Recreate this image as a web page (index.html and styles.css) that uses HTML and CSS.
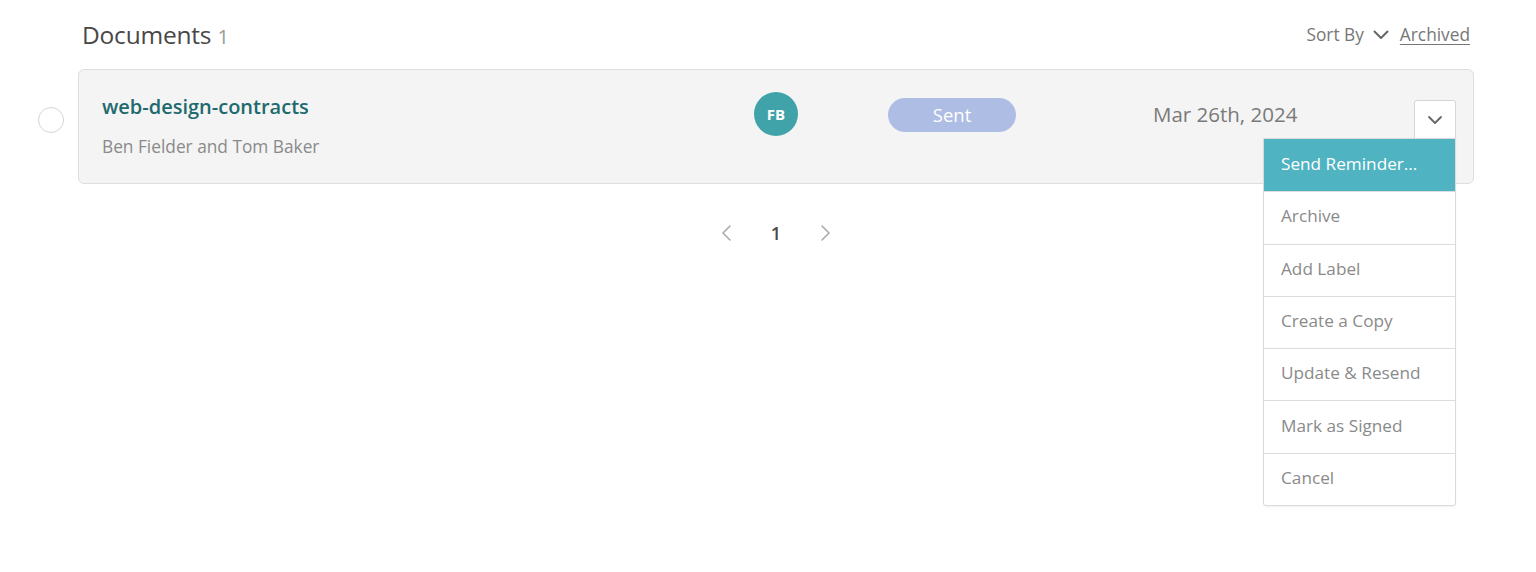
FILE: index.html
```html
<!DOCTYPE html>
<html>
<head>
<meta charset="utf-8">
<link rel="stylesheet" href="styles.css">
</head>
<body>
<div class="page">
  <div class="header">
    <h1 class="title">Documents <span class="count">1</span></h1>
    <div class="sort">
      <span class="sort-label">Sort By</span>
      <svg class="sort-chev" width="16" height="10" viewBox="0 0 16 10"><path d="M1.5 1.5 L8 8 L14.5 1.5" fill="none" stroke="#666" stroke-width="2" stroke-linecap="round" stroke-linejoin="round"/></svg>
      <a class="archived">Archived</a>
    </div>
  </div>
  <div class="row">
    <span class="radio"></span>
    <div class="card">
      <div class="doc">
        <div class="doc-name">web-design-contracts</div>
        <div class="doc-people">Ben Fielder and Tom Baker</div>
      </div>
      <div class="avatar">FB</div>
      <div class="pill">Sent</div>
      <div class="date">Mar 26th, 2024</div>
      <div class="actions">
        <button class="toggle">
          <svg width="16" height="10" viewBox="0 0 16 10"><path d="M2 2 L8 8 L14 2" fill="none" stroke="#666" stroke-width="1.8" stroke-linecap="round" stroke-linejoin="round"/></svg>
        </button>
        <ul class="menu">
          <li class="active">Send Reminder...</li>
          <li>Archive</li>
          <li>Add Label</li>
          <li>Create a Copy</li>
          <li>Update &amp; Resend</li>
          <li>Mark as Signed</li>
          <li>Cancel</li>
        </ul>
      </div>
    </div>
  </div>
  <div class="pager">
    <svg width="12" height="18" viewBox="0 0 12 18"><path d="M10 2 L3 9 L10 16" fill="none" stroke="#aaa" stroke-width="1.6" stroke-linecap="round" stroke-linejoin="round"/></svg>
    <span class="page-num">1</span>
    <svg width="12" height="18" viewBox="0 0 12 18"><path d="M2 2 L9 9 L2 16" fill="none" stroke="#aaa" stroke-width="1.6" stroke-linecap="round" stroke-linejoin="round"/></svg>
  </div>
</div>
</body>
</html>
```

FILE: styles.css
```css
* { box-sizing: border-box; }
html, body { min-height: 100%; }
body {
  margin: 0;
  background: #fff;
  font-family: "Open Sans", "Liberation Sans", sans-serif;
}
.page {
  padding: 0 62px 0 38px;
  min-height: 572px;
}
.header {
  display: flex;
  align-items: center;
  justify-content: space-between;
  height: 69px;
  padding: 0 4px 0 44px;
}
.title {
  margin: 0;
  font-size: 24.5px;
  font-weight: 500;
  color: #484848;
  letter-spacing: -0.2px;
}
.count {
  font-size: 20px;
  color: #9a9a9a;
}
.sort {
  display: flex;
  align-items: center;
  gap: 9px;
  font-size: 17.3px;
  color: #777;
}
.sort-chev { margin-right: 2px; }
.archived {
  text-decoration: underline;
  text-underline-offset: 3px;
  color: #777;
}
.row {
  display: flex;
  align-items: flex-start;
  gap: 14px;
}
.radio {
  width: 26px;
  height: 26px;
  border: 1.5px solid #d4d4d4;
  border-radius: 50%;
  background: #fff;
  flex: none;
  margin-top: 38px;
}
.card {
  flex: 1;
  display: flex;
  align-items: flex-start;
  background: #f4f4f4;
  border: 1px solid #dedede;
  border-radius: 6px;
  padding: 23px 17px 24px 23px;
}
.doc {
  width: 652px;
}
.doc-name {
  font-size: 20px;
  line-height: 28px;
  font-weight: 600;
  color: #1e6a6e;
}
.doc-people {
  margin-top: 14px;
  font-size: 17.3px;
  line-height: 24px;
  color: #8a8a8a;
}
.avatar {
  width: 44px;
  height: 44px;
  margin-top: -1px;
  border-radius: 50%;
  background: #3fa3a9;
  color: #fff;
  font-size: 15px;
  font-weight: 700;
  display: flex;
  align-items: center;
  justify-content: center;
}
.pill {
  margin: 5px 0 0 90px;
  width: 128px;
  height: 34px;
  border-radius: 17px;
  background: #aebde4;
  color: #fff;
  font-size: 18.5px;
  padding-bottom: 1px;
  display: flex;
  align-items: center;
  justify-content: center;
}
.date {
  margin: 7px 0 0 137px;
  font-size: 20.5px;
  line-height: 28px;
  color: #7a7a7a;
}
.actions {
  margin-left: auto;
  margin-top: 7px;
  position: relative;
}
.toggle {
  width: 42px;
  height: 40px;
  background: #fff;
  border: 1px solid #d6d6d6;
  border-radius: 3px;
  display: flex;
  align-items: center;
  justify-content: center;
  padding: 0;
}
.menu {
  position: absolute;
  top: 38px;
  right: 0;
  width: 193px;
  margin: 0;
  padding: 0;
  list-style: none;
  background: #fff;
  border: 1px solid #dadada;
  border-radius: 0 0 3px 3px;
  box-shadow: 0 1px 2px rgba(0,0,0,0.06);
  z-index: 2;
}
.menu li {
  height: 52.3px;
  display: flex;
  align-items: center;
  padding: 0 0 4px 17px;
  font-size: 17.2px;
  color: #8a8a8a;
  border-top: 1px solid #dcdcdc;
  white-space: nowrap;
}
.menu li:first-child { border-top: none; }
.menu li.active {
  background: #4fb3c2;
  color: #fff;
}
.pager {
  display: flex;
  align-items: center;
  justify-content: center;
  gap: 39px;
  height: 100px;
  padding-left: 40px;
  padding-bottom: 3px;
}
.page-num {
  font-size: 18px;
  font-weight: 600;
  color: #4a4a4a;
}
```
